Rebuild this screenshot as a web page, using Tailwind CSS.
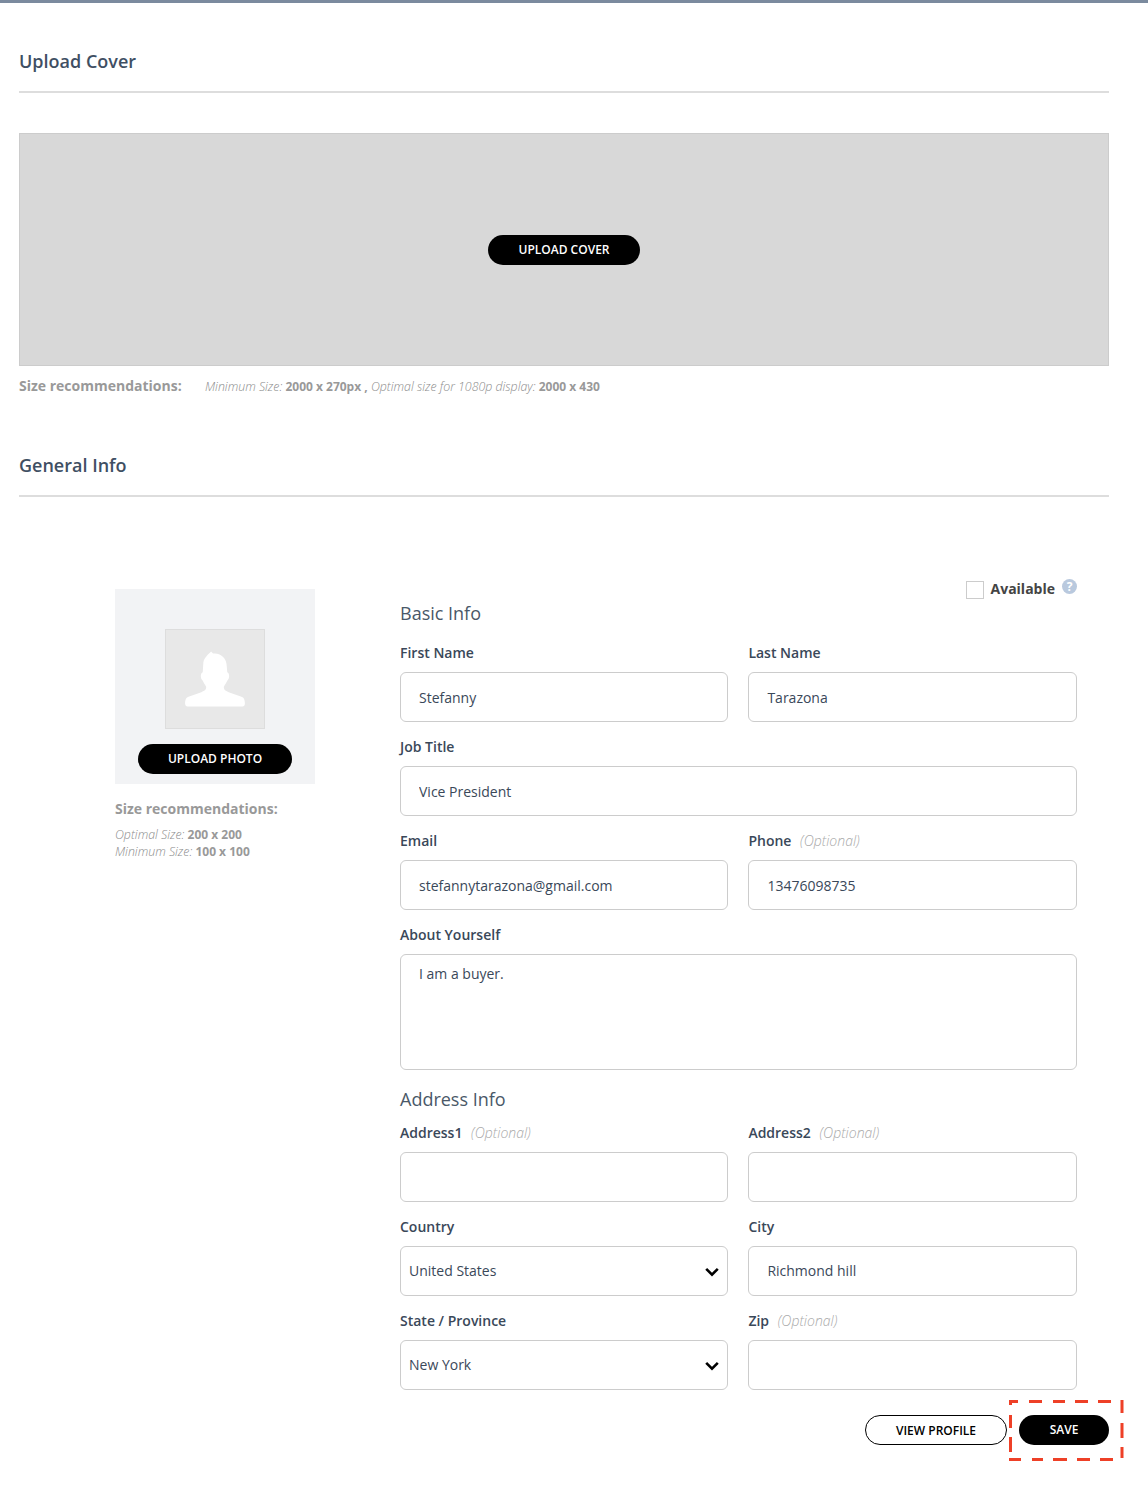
<!DOCTYPE html>
<html lang="en">
<head>
  <meta charset="UTF-8">
  <meta name="viewport" content="width=device-width, initial-scale=1.0">
  <title>Edit Profile</title>
  <script src="https://cdn.jsdelivr.net/npm/@tailwindcss/browser@4"></script>
</head>
<body class="bg-white font-['Open_Sans',sans-serif] text-[#3a4859]">
  <div class="h-[3px] bg-[#7b8a9e]"></div>

  <main class="w-[1090px] ml-[19px] pb-[53px]">
    <!-- Upload cover -->
    <h2 class="pt-[44px] pb-[16px] border-b-2 border-[#dddddd] text-[18px] leading-[28px] font-semibold text-[#3f4f63]">Upload Cover</h2>
    <div class="mt-[40px] h-[233px] border border-[#cccccc] bg-[#d8d8d8] flex items-center justify-center">
      <button class="w-[152px] h-[30px] rounded-full bg-black text-white text-[12px] font-semibold">UPLOAD COVER</button>
    </div>
    <div class="mt-[10px] flex items-center h-[20px] text-[#999999]">
      <span class="text-[14px] font-bold w-[186px] mt-[-1px]">Size recommendations:</span>
      <span class="text-[12.35px] mt-[2px] italic font-light text-[#8c8c8c]">Minimum Size: <b class="not-italic font-bold text-[12px] text-[#999999]">2000 x 270px ,</b> Optimal size for 1080p display: <b class="not-italic font-bold text-[12px] text-[#999999]">2000 x 430</b></span>
    </div>

    <!-- General info -->
    <h2 class="mt-[55px] pb-[16px] border-b-2 border-[#dddddd] text-[18px] leading-[28px] font-semibold text-[#3f4f63]">General Info</h2>

    <div class="mt-[83px] flex">
      <!-- Photo -->
      <div class="w-[381px] pl-[96px] pt-[9px] text-[#999999]">
        <div class="w-[200px] h-[195px] bg-[#f2f3f5] pt-[40px] flex flex-col items-center">
          <div class="w-[100px] h-[100px] border border-[#dddddd] bg-[#e8e8e8]">
            <svg viewBox="0 0 100 100" class="w-[98px] h-[98px]" fill="#ffffff"><path d="M46 22 L48 24 C56 23 62 29 62 37 L62.5 43 C65 44 65 49 63 51 C62 53 60 56 59 58 C59 61 60 62 64 63.5 L77 68 C80 69 80.5 72 80.5 75 C80.5 77 79.5 78 78 78 L22 78 C20.5 78 19.5 77 19.5 75 C19.5 72 20 69 23 68 L36 63.5 C40 62 41 61 41 58 C40 56 38 53 37 51 C35 49 35 44 37.5 43 L38 35 C38 29 42 26 46 22 Z"/></svg>
          </div>
          <button class="mt-[15px] w-[154px] h-[30px] rounded-full bg-black text-white text-[12px] font-semibold">UPLOAD PHOTO</button>
        </div>
        <p class="mt-[15px] text-[14px] leading-[20px] font-bold">Size recommendations:</p>
        <p class="mt-[7px] text-[12.35px] leading-[17px] italic font-light text-[#8c8c8c]">Optimal Size: <b class="not-italic font-bold text-[12px] text-[#999999]">200 x 200</b></p>
        <p class="text-[12.35px] leading-[17px] italic font-light text-[#8c8c8c]">Minimum Size: <b class="not-italic font-bold text-[12px] text-[#999999]">100 x 100</b></p>
      </div>

      <!-- Form -->
      <div class="w-[677px]">
        <div class="h-[18px] flex justify-end items-start">
          <span class="mt-px w-[18px] h-[18px] border border-[#cccccc]"></span>
          <span class="ml-[7px] mt-[-1px] text-[14px] leading-[20px] font-bold text-[#444444]">Available</span>
          <span class="ml-[7px] mt-[-1px] w-[15px] h-[15px] rounded-full bg-[#b9c9de] text-white text-[12px] leading-[15px] font-bold text-center">?</span>
        </div>
        <h3 class="text-[18px] leading-[30px] text-[#4a5868]">Basic Info</h3>

        <div class="grid grid-cols-[328.4px_328.6px] gap-x-5">
          <div>
            <label class="block pt-[15px] h-[44px] text-[14px] leading-[20px] font-semibold">First Name</label>
            <input value="Stefanny" class="block w-full h-[50px] pl-[18px] border border-[#cccccc] rounded-[6px] text-[14px]">
          </div>
          <div>
            <label class="block pt-[15px] h-[44px] text-[14px] leading-[20px] font-semibold">Last Name</label>
            <input value="Tarazona" class="block w-full h-[50px] pl-[18px] border border-[#cccccc] rounded-[6px] text-[14px]">
          </div>
          <div class="col-span-2">
            <label class="block pt-[15px] h-[44px] text-[14px] leading-[20px] font-semibold">Job Title</label>
            <input value="Vice President" class="block w-full h-[50px] pl-[18px] border border-[#cccccc] rounded-[6px] text-[14px]">
          </div>
          <div>
            <label class="block pt-[15px] h-[44px] text-[14px] leading-[20px] font-semibold">Email</label>
            <input value="stefannytarazona@gmail.com" class="block w-full h-[50px] pl-[18px] border border-[#cccccc] rounded-[6px] text-[14px]">
          </div>
          <div>
            <label class="block pt-[15px] h-[44px] text-[14px] leading-[20px] font-semibold">Phone <i class="ml-[5px] font-light text-[#aaaaaa]">(Optional)</i></label>
            <input value="13476098735" class="block w-full h-[50px] pl-[18px] border border-[#cccccc] rounded-[6px] text-[14px]">
          </div>
          <div class="col-span-2">
            <label class="block pt-[15px] h-[44px] text-[14px] leading-[20px] font-semibold">About Yourself</label>
            <textarea class="block w-full h-[116px] pl-[18px] pt-[9px] border border-[#cccccc] rounded-[6px] text-[14px] leading-[20px] resize-none">I am a buyer.</textarea>
          </div>
        </div>

        <h3 class="pt-[20px] text-[18px] leading-[18px] text-[#4a5868]">Address Info</h3>

        <div class="grid grid-cols-[328.4px_328.6px] gap-x-5">
          <div>
            <label class="block pt-[15px] h-[44px] text-[14px] leading-[20px] font-semibold">Address1 <i class="ml-[5px] font-light text-[#aaaaaa]">(Optional)</i></label>
            <input class="block w-full h-[50px] pl-[18px] border border-[#cccccc] rounded-[6px] text-[14px]">
          </div>
          <div>
            <label class="block pt-[15px] h-[44px] text-[14px] leading-[20px] font-semibold">Address2 <i class="ml-[5px] font-light text-[#aaaaaa]">(Optional)</i></label>
            <input class="block w-full h-[50px] pl-[18px] border border-[#cccccc] rounded-[6px] text-[14px]">
          </div>
          <div>
            <label class="block pt-[15px] h-[44px] text-[14px] leading-[20px] font-semibold">Country</label>
            <div class="relative">
              <select class="block w-full h-[50px] pl-[8px] pb-[2px] border border-[#cccccc] rounded-[6px] text-[14px] bg-white appearance-none"><option>United States</option></select>
              <svg viewBox="0 0 14 10" class="absolute right-[9px] top-[21px] w-[14px] h-[10px] pointer-events-none" fill="none" stroke="#000000" stroke-width="2.6"><path d="M1.2 1.8 L7 7.6 L12.8 1.8"/></svg>
            </div>
          </div>
          <div>
            <label class="block pt-[15px] h-[44px] text-[14px] leading-[20px] font-semibold">City</label>
            <input value="Richmond hill" class="block w-full h-[50px] pl-[18px] pb-[2px] border border-[#cccccc] rounded-[6px] text-[14px]">
          </div>
          <div>
            <label class="block pt-[15px] h-[44px] text-[14px] leading-[20px] font-semibold">State / Province</label>
            <div class="relative">
              <select class="block w-full h-[50px] pl-[8px] pb-[2px] border border-[#cccccc] rounded-[6px] text-[14px] bg-white appearance-none"><option>New York</option></select>
              <svg viewBox="0 0 14 10" class="absolute right-[9px] top-[21px] w-[14px] h-[10px] pointer-events-none" fill="none" stroke="#000000" stroke-width="2.6"><path d="M1.2 1.8 L7 7.6 L12.8 1.8"/></svg>
            </div>
          </div>
          <div>
            <label class="block pt-[15px] h-[44px] text-[14px] leading-[20px] font-semibold">Zip <i class="ml-[5px] font-light text-[#aaaaaa]">(Optional)</i></label>
            <input class="block w-full h-[50px] pl-[18px] border border-[#cccccc] rounded-[6px] text-[14px]">
          </div>
        </div>
      </div>
    </div>

    <!-- Actions -->
    <div class="mt-[25px] flex justify-end gap-[12px]">
      <button class="w-[142px] h-[30px] pt-px rounded-full border border-black bg-white text-black text-[12px] font-semibold">VIEW PROFILE</button>
      <div class="relative">
        <button class="block w-[90px] h-[30px] rounded-full bg-black text-white text-[12px] font-semibold">SAVE</button>
        <!-- red highlight around save, dashes placed by hand -->
        <svg class="absolute left-[-10px] top-[-15px]" width="115" height="61" fill="none" stroke="#ee4027" stroke-width="3"><path d="M0 1.5H9M20 1.5H33M44 1.5H56M66 1.5H79M89 1.5H102M112 1.5H114.5M113 0V13M113 23V38M113 47V58M0 59.5H12M23 59.5H34M44 59.5H58M68 59.5H81M91 59.5H104M1.5 0V5M1.5 15V28M1.5 37V52M1.5 58V61"/></svg>
      </div>
    </div>
  </main>
</body>
</html>
